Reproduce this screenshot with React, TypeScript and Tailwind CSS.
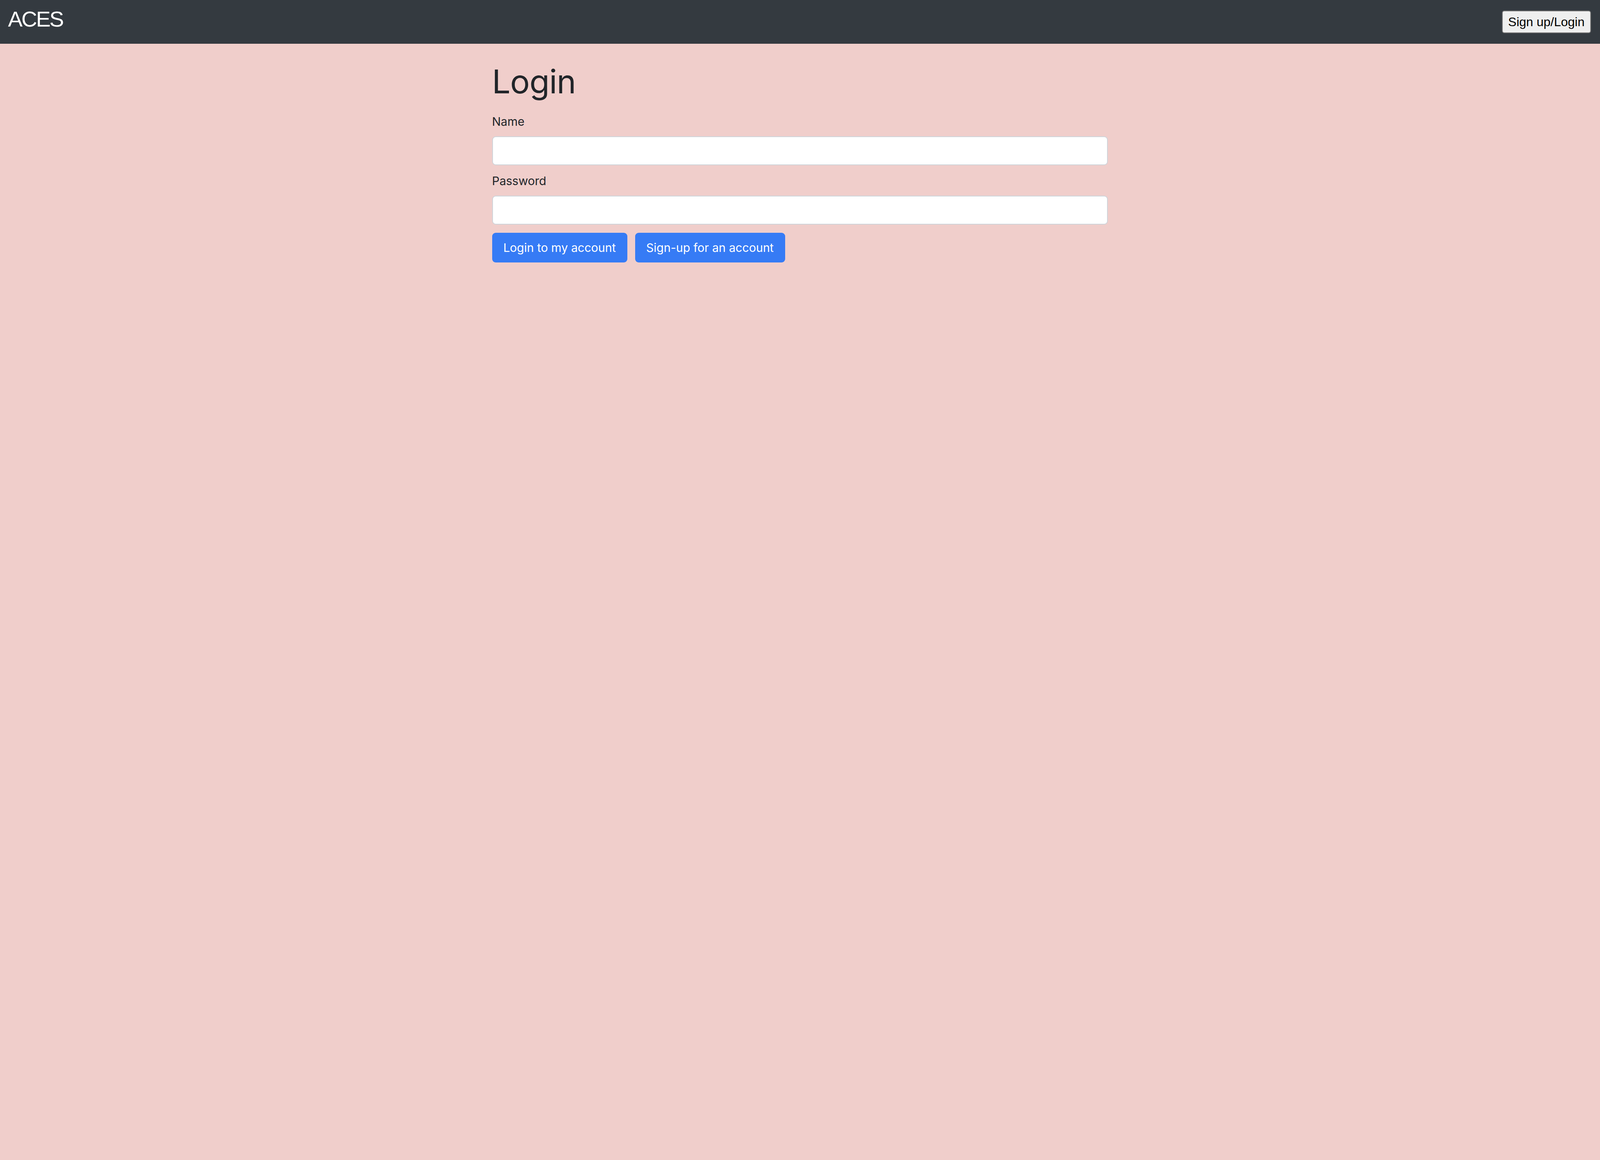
export default function App() {
  return (
    <div className="min-h-screen bg-[#f0cecb] font-['Inter',sans-serif] text-[#212529]">
      {/* Top bar */}
      <nav className="flex h-[112px] items-start justify-between bg-[#343a40] pl-[0.5%] pr-[0.57%]">
        <span className="mt-[21px] font-['Liberation_Sans',Arial,sans-serif] text-[56px] leading-none tracking-[-3px] text-white">
          ACES
        </span>
        <button
          type="button"
          className="mt-[27px] h-[58px] w-[228px] rounded-[6px] border-2 border-[#767676] bg-[#efefef] font-['Liberation_Sans',Arial,sans-serif] text-[32px] leading-none text-black"
        >
          Sign up/Login
        </button>
      </nav>

      {/* Login form */}
      <div className="mx-auto w-[38.5%]">
        <h1 className="pt-[47px] text-[84px] font-normal leading-[100px] tracking-[-1px]">
          Login
        </h1>
        <label className="mt-[34px] block text-[30px] leading-[36px]" htmlFor="name">
          Name
        </label>
        <input
          id="name"
          type="text"
          className="mt-[20px] block h-[74px] w-full rounded-[9px] border-2 border-[#ced4da] bg-white px-6 text-[30px] outline-none"
        />
        <label className="mt-[22px] block text-[30px] leading-[36px]" htmlFor="password">
          Password
        </label>
        <input
          id="password"
          type="password"
          className="mt-[20px] block h-[74px] w-full rounded-[9px] border-2 border-[#ced4da] bg-white px-6 text-[30px] outline-none"
        />
        <div className="mt-[21px] flex gap-[20px]">
          <button
            type="button"
            className="h-[76px] w-[346px] rounded-[9px] bg-[#367bf5] text-[30px] leading-none text-white"
          >
            Login to my account
          </button>
          <button
            type="button"
            className="h-[76px] w-[384px] rounded-[9px] bg-[#367bf5] text-[30px] leading-none text-white"
          >
            Sign-up for an account
          </button>
        </div>
      </div>
    </div>
  );
}
